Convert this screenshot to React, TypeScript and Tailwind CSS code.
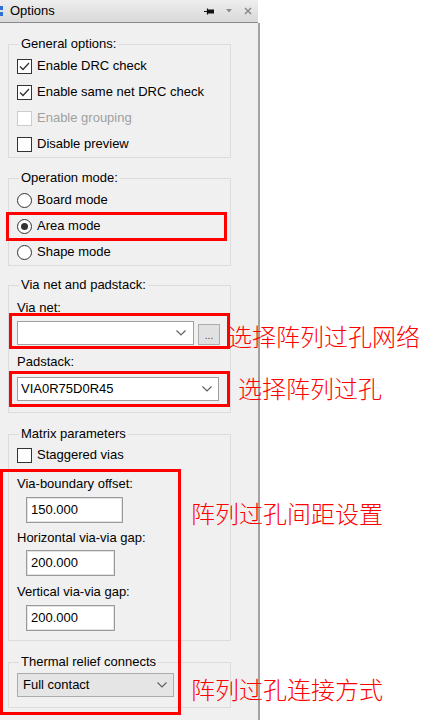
import React from 'react';

const uiFont = "font-['Liberation_Sans',Arial,sans-serif]";
const cjkFont = "font-['Noto_Sans_CJK_SC','Noto_Sans',sans-serif]";

const CheckMark = () => (
  <svg width="11" height="9" viewBox="0 0 11 9">
    <path d="M1 4.5 L4 7.5 L10 1" fill="none" stroke="#333333" strokeWidth="1.3" />
  </svg>
);

const Chevron = () => (
  <svg width="10" height="6" viewBox="0 0 10 6">
    <path d="M0.5 0.5 L5 5 L9.5 0.5" fill="none" stroke="#606060" strokeWidth="1.2" />
  </svg>
);

interface CheckProps {
  label: string;
  checked?: boolean;
  disabled?: boolean;
}

const CheckBox: React.FC<CheckProps> = ({ label, checked = false, disabled = false }) => (
  <div className="flex h-[26px] items-center">
    <span
      className={`flex h-[15px] w-[15px] items-center justify-center border bg-white ${
        disabled ? 'border-[#cccccc]' : 'border-[#333333]'
      }`}
    >
      {checked && <CheckMark />}
    </span>
    <span className={`ml-[5px] text-[13px] leading-[16px] ${disabled ? 'text-[#a0a0a0]' : 'text-black'}`}>
      {label}
    </span>
  </div>
);

const Radio: React.FC<CheckProps> = ({ label, checked = false }) => (
  <div className="flex h-[26px] items-center">
    <span className="flex h-[15px] w-[15px] items-center justify-center rounded-full border border-[#333333] bg-white">
      {checked && <span className="h-[7px] w-[7px] rounded-full bg-[#333333]" />}
    </span>
    <span className="ml-[5px] text-[13px] leading-[16px] text-black">{label}</span>
  </div>
);

interface GroupProps {
  title: string;
  className?: string;
  children: React.ReactNode;
}

const GroupBox: React.FC<GroupProps> = ({ title, className = '', children }) => (
  <fieldset className={`w-[223px] border border-[#dcdcdc] ${className}`}>
    <legend className="ml-[10px] px-[2px] text-[13px] leading-[16px] text-black">{title}</legend>
    <div className="px-[8px]">{children}</div>
  </fieldset>
);

const Label = ({ text, className = '' }: { text: string; className?: string }) => (
  <div className={`h-[16px] text-[13px] leading-[16px] text-black ${className}`}>{text}</div>
);

const NumberBox = ({ value, width, className = '' }: { value: string; width: string; className?: string }) => (
  <div
    className={`ml-[9px] flex h-[26px] items-center border border-[#9a9a9a] bg-white pl-[4px] text-[13px] text-black shadow-[inset_0_0_0_1px_#e3e3e3] ${width} ${className}`}
  >
    {value}
  </div>
);

const RedBox = ({ className }: { className: string }) => (
  <div className={`pointer-events-none absolute border-[3px] border-[#ff0000] ${className}`} />
);

const Note = ({ text, className }: { text: string; className: string }) => (
  <div className={`absolute whitespace-nowrap text-[24px] font-light leading-[24px] text-[#ff0000] ${cjkFont} ${className}`}>
    {text}
  </div>
);

export default function App() {
  return (
    <div className={`relative flex h-[720px] w-[435px] overflow-hidden bg-white ${uiFont}`}>
      <div className="flex w-[260px] flex-col">
        {/* title bar */}
        <div className="flex h-[23px] w-[258px] items-center border-b border-[#8a8a8a] bg-gradient-to-b from-[#eeeeee] to-[#d9d9d9]">
          <div className="flex h-[10px] w-[3px] flex-col justify-between">
            <span className="h-[4px] w-[3px] bg-[#2e6fd6]" />
            <span className="h-[4px] w-[3px] bg-[#2e6fd6]" />
          </div>
          <span className="ml-[7px] text-[13px] leading-[16px] text-black">Options</span>
          <div className="ml-auto mr-[6px] flex items-center gap-[12px]">
            <svg width="10" height="7" viewBox="0 0 10 7">
              <path d="M0 3.5 H3.5 M3.5 0.5 V6.5" stroke="#111111" strokeWidth="1.2" />
              <rect x="4" y="1.5" width="6" height="4" fill="#111111" />
            </svg>
            <svg width="6" height="4" viewBox="0 0 6 4">
              <path d="M0 0 H6 L3 3.5 Z" fill="#8a8a8a" />
            </svg>
            <svg width="8" height="8" viewBox="0 0 8 8">
              <path d="M1 1 L7 7 M7 1 L1 7" stroke="#8a8a8a" strokeWidth="1.5" />
            </svg>
          </div>
        </div>

        {/* panel body */}
        <div className="flex flex-1 flex-col border-r-2 border-[#a3a3a3] bg-[#f0f0f0] pl-[8px]">
          <GroupBox title="General options:" className="mt-[13px]">
            <div className="pt-[1px]">
              <CheckBox label="Enable DRC check" checked />
              <CheckBox label="Enable same net DRC check" checked />
              <CheckBox label="Enable grouping" disabled />
              <CheckBox label="Disable preview" />
            </div>
          </GroupBox>

          <GroupBox title="Operation mode:" className="mt-[12px]">
            <div className="pt-[1px]">
              <Radio label="Board mode" />
              <Radio label="Area mode" checked />
              <Radio label="Shape mode" />
            </div>
          </GroupBox>

          <GroupBox title="Via net and padstack:" className="mt-[11px]">
            <div className="pb-[11px] pt-[7px]">
              <Label text="Via net:" />
              <div className="mt-[5px] flex items-start">
                <div className="flex h-[24px] w-[177px] items-center justify-end border border-[#a0a0a0] bg-white pr-[7px]">
                  <Chevron />
                </div>
                <div className="ml-[4px] mt-[3px] flex h-[21px] w-[22px] items-end justify-center border border-[#adadad] bg-[#e1e1e1] pb-[3px] text-[10px] leading-[10px] text-[#444444]">
                  ...
                </div>
              </div>
              <Label text="Padstack:" className="mt-[9px]" />
              <div className="mt-[7px] flex h-[24px] w-[202px] items-center justify-between border border-[#a0a0a0] bg-white pl-[3px] pr-[6px] text-[13px] text-black">
                <span>VIA0R75D0R45</span>
                <Chevron />
              </div>
            </div>
          </GroupBox>

          <GroupBox title="Matrix parameters" className="mt-[13px]">
            <div className="pb-[9px]">
              <CheckBox label="Staggered vias" />
              <Label text="Via-boundary offset:" className="mt-[8px]" />
              <NumberBox value="150.000" width="w-[97px]" className="mt-[5px]" />
              <Label text="Horizontal via-via gap:" className="mt-[7px]" />
              <NumberBox value="200.000" width="w-[89px]" className="mt-[4px]" />
              <Label text="Vertical via-via gap:" className="mt-[8px]" />
              <NumberBox value="200.000" width="w-[89px]" className="mt-[5px]" />
            </div>
          </GroupBox>

          <GroupBox title="Thermal relief connects" className="mt-[13px]">
            <div className="pb-[10px] pt-[3px]">
              <div className="flex h-[24px] w-[157px] items-center justify-between border border-[#acacac] bg-[#e5e5e5] pl-[5px] pr-[6px] text-[13px] text-black">
                <span>Full contact</span>
                <Chevron />
              </div>
            </div>
          </GroupBox>
        </div>
      </div>

      <div className="flex-1 bg-white" />

      {/* annotations */}
      <RedBox className="left-[6px] top-[212px] h-[29px] w-[221px]" />
      <RedBox className="left-[9px] top-[313px] h-[36px] w-[221px]" />
      <RedBox className="left-[9px] top-[371px] h-[36px] w-[221px]" />
      <RedBox className="left-0 top-[469px] h-[246px] w-[181px]" />

      <Note text="选择阵列过孔网络" className="left-[228px] top-[324px]" />
      <Note text="选择阵列过孔" className="left-[238px] top-[376px]" />
      <Note text="阵列过孔间距设置" className="left-[191px] top-[501px]" />
      <Note text="阵列过孔连接方式" className="left-[191px] top-[677px]" />
    </div>
  );
}
